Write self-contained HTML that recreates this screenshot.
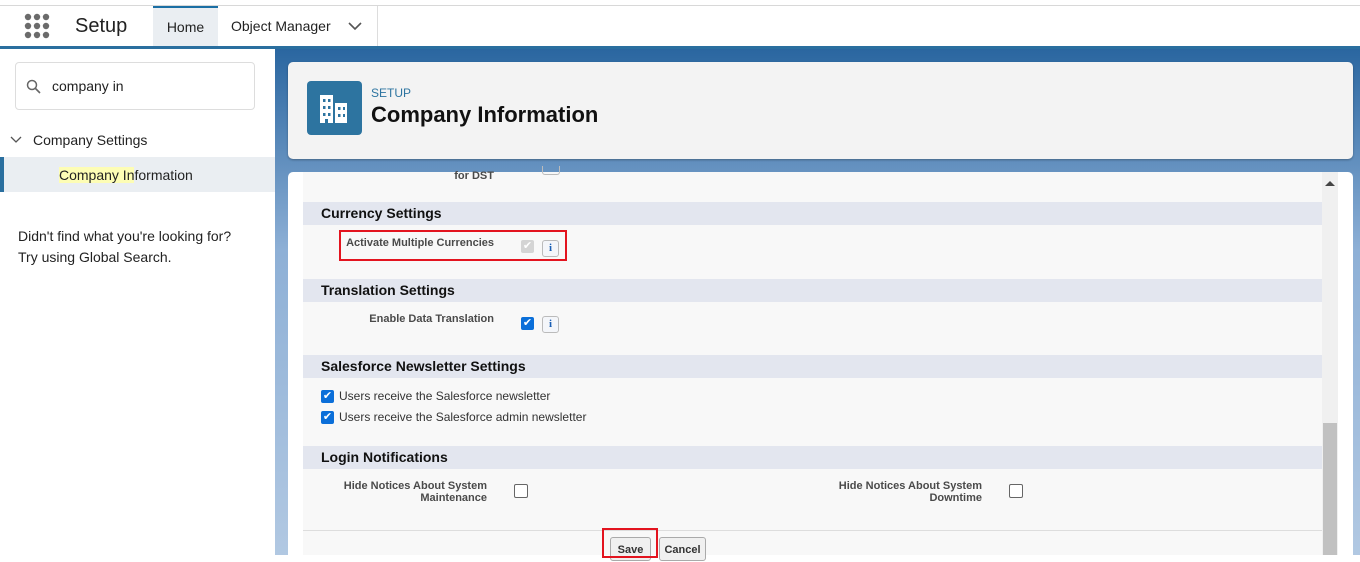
<!DOCTYPE html>
<html><head><style>
body{margin:0;width:1360px;height:555px;overflow:hidden;font-family:"Liberation Sans",Arial,sans-serif;background:#fff;position:relative}
.a{position:absolute}
.sec{position:absolute;left:303px;width:1019px;height:23px;background:#e3e6ef;font-weight:bold;font-size:14px;color:#111;line-height:23px;padding-left:18px;box-sizing:border-box}
.lbl{position:absolute;font-size:11px;font-weight:bold;color:#4a4a4a;text-align:right}
.cb{position:absolute;width:12px;height:12px;border:1px solid #666;border-radius:2px;background:#fff}
.cbc{position:absolute;width:13px;height:13px;border-radius:2px;background:#0b6fd9;color:#fff;font-size:11px;line-height:13px;text-align:center}
.info{position:absolute;width:15px;height:15px;border:1px solid #bbb;border-radius:3px;background:#f4f6fa;color:#1a5fb4;font-size:11px;font-weight:bold;font-family:"Liberation Serif",serif;text-align:center;line-height:15px}
</style></head><body>
<div class="a" style="left:0;top:5px;width:1360px;height:1px;background:#d8d8d8"></div>
<svg class="a" style="left:24px;top:13px" width="28" height="26"><g fill="#6b6b6b"><circle cx="4" cy="4" r="3.2"/><circle cx="13" cy="4" r="3.2"/><circle cx="22" cy="4" r="3.2"/><circle cx="4" cy="13" r="3.2"/><circle cx="13" cy="13" r="3.2"/><circle cx="22" cy="13" r="3.2"/><circle cx="4" cy="22" r="3.2"/><circle cx="13" cy="22" r="3.2"/><circle cx="22" cy="22" r="3.2"/></g></svg>
<div class="a" style="left:75px;top:15px;font-size:20px;color:#222">Setup</div>
<div class="a" style="left:153px;top:6px;width:65px;height:40px;background:#eaeef2;border-top:2px solid #1b6fa4;box-sizing:border-box;font-size:14px;color:#222;text-align:center;line-height:38px">Home</div>
<div class="a" style="left:218px;top:6px;width:160px;height:40px;border-right:1px solid #ddd;box-sizing:border-box;font-size:14px;color:#222;line-height:40px;padding-left:13px">Object Manager</div>
<svg class="a" style="left:348px;top:22px" width="14" height="9"><path d="M1 1l6 6 6-6" stroke="#555" stroke-width="1.6" fill="none"/></svg>
<div class="a" style="left:0;top:46px;width:1360px;height:3px;background:#2a6f9f"></div>
<div class="a" style="left:15px;top:62px;width:240px;height:48px;border:1px solid #ddd;border-radius:4px;box-sizing:border-box"></div>
<svg class="a" style="left:26px;top:79px" width="16" height="16"><circle cx="6" cy="6" r="4.5" stroke="#666" stroke-width="1.5" fill="none"/><path d="M9.5 9.5l4.5 4.5" stroke="#666" stroke-width="1.6"/></svg>
<div class="a" style="left:52px;top:78px;font-size:14px;color:#222">company in</div>
<svg class="a" style="left:10px;top:136px" width="12" height="8"><path d="M1 1l5 5 5-5" stroke="#555" stroke-width="1.3" fill="none"/></svg>
<div class="a" style="left:33px;top:132px;font-size:14px;color:#222">Company Settings</div>
<div class="a" style="left:0;top:157px;width:275px;height:35px;background:#eaeef2"></div>
<div class="a" style="left:0;top:157px;width:4px;height:35px;background:#2a6f9f"></div>
<div class="a" style="left:59px;top:167px;font-size:14px;color:#222"><span style="background:#fdfdb5">Company In</span>formation</div>
<div class="a" style="left:18px;top:226px;font-size:14px;color:#222;line-height:21px">Didn't find what you're looking for?<br>Try using Global Search.</div>
<div class="a" style="left:275px;top:49px;width:1085px;height:506px;background:linear-gradient(#2a66a0,#8eb0d6 40%,#b1c8e2)"></div>
<div class="a" style="left:288px;top:62px;width:1065px;height:97px;background:#f3f3f3;border-radius:5px;box-shadow:0 1px 2px rgba(0,0,0,.3)"></div>
<div class="a" style="left:307px;top:81px;width:55px;height:54px;background:#2d74a0;border-radius:4px"></div>
<svg class="a" style="left:318px;top:95px" width="32" height="28" fill="#fff"><rect x="2" y="0" width="13" height="28"/><rect x="17" y="8" width="12" height="20"/><g fill="#2d74a0"><rect x="5" y="4" width="2.5" height="3"/><rect x="10" y="4" width="2.5" height="3"/><rect x="5" y="11" width="2.5" height="3"/><rect x="10" y="11" width="2.5" height="3"/><rect x="5" y="18" width="2.5" height="3"/><rect x="10" y="18" width="2.5" height="3"/><rect x="20" y="12" width="2.5" height="3"/><rect x="25" y="12" width="2" height="3"/><rect x="20" y="19" width="2.5" height="3"/><rect x="25" y="19" width="2" height="3"/><rect x="7" y="24" width="3" height="4"/></g></svg>
<div class="a" style="left:371px;top:86px;font-size:12px;color:#2d74a0">SETUP</div>
<div class="a" style="left:371px;top:102px;font-size:22px;font-weight:bold;color:#111">Company Information</div>
<div class="a" style="left:288px;top:172px;width:1065px;height:383px;background:#fff;border-radius:5px 5px 0 0"></div>
<div class="a" style="left:303px;top:172px;width:1019px;height:383px;background:#f8f8f8"></div>
<div class="a" style="left:1322px;top:172px;width:16px;height:383px;background:#f0f0f0"></div>
<div class="a" style="left:1323px;top:423px;width:14px;height:132px;background:#c1c1c1"></div>
<svg class="a" style="left:1325px;top:180px" width="10" height="6"><path d="M0 6L5 1 10 6z" fill="#444"/></svg>
<div class="lbl" style="left:420px;top:170px;width:74px">for DST</div>
<div class="a" style="left:542px;top:166px;width:16px;height:8px;border:1px solid #bbb;border-top:none;border-radius:0 0 3px 3px"></div>
<div class="sec" style="top:202px">Currency Settings</div>
<div class="lbl" style="left:315px;top:237px;width:179px">Activate Multiple Currencies</div>
<div class="a" style="left:521px;top:240px;width:13px;height:13px;background:#d4d4d4;border-radius:2px;color:#fff;font-size:11px;text-align:center;line-height:13px">✔</div>
<div class="info" style="left:542px;top:240px">i</div>
<div class="a" style="left:339px;top:230px;width:228px;height:31px;border:2px solid #e3141f;box-sizing:border-box"></div>
<div class="sec" style="top:279px">Translation Settings</div>
<div class="lbl" style="left:320px;top:313px;width:174px">Enable Data Translation</div>
<div class="cbc" style="left:521px;top:317px">✔</div>
<div class="info" style="left:542px;top:316px">i</div>
<div class="sec" style="top:355px">Salesforce Newsletter Settings</div>
<div class="cbc" style="left:321px;top:390px">✔</div>
<div class="a" style="left:339px;top:389px;font-size:12px;color:#333">Users receive the Salesforce newsletter</div>
<div class="cbc" style="left:321px;top:411px">✔</div>
<div class="a" style="left:339px;top:410px;font-size:12px;color:#333">Users receive the Salesforce admin newsletter</div>
<div class="sec" style="top:446px">Login Notifications</div>
<div class="lbl" style="left:320px;top:480px;width:167px;line-height:12px">Hide Notices About System<br>Maintenance</div>
<div class="cb" style="left:514px;top:484px"></div>
<div class="lbl" style="left:800px;top:480px;width:182px;line-height:12px">Hide Notices About System<br>Downtime</div>
<div class="cb" style="left:1009px;top:484px"></div>
<div class="a" style="left:303px;top:530px;width:1019px;height:1px;background:#ddd"></div>
<div class="a" style="left:610px;top:537px;width:39px;height:22px;border:1px solid #aaa;border-radius:3px;background:#f0f0f0;font-size:11px;font-weight:bold;color:#333;text-align:center;line-height:24px">Save</div>
<div class="a" style="left:659px;top:537px;width:45px;height:22px;border:1px solid #aaa;border-radius:3px;background:#f0f0f0;font-size:11px;font-weight:bold;color:#333;text-align:center;line-height:24px">Cancel</div>
<div class="a" style="left:602px;top:528px;width:56px;height:30px;border:2px solid #e3141f;box-sizing:border-box"></div>
</body></html>
